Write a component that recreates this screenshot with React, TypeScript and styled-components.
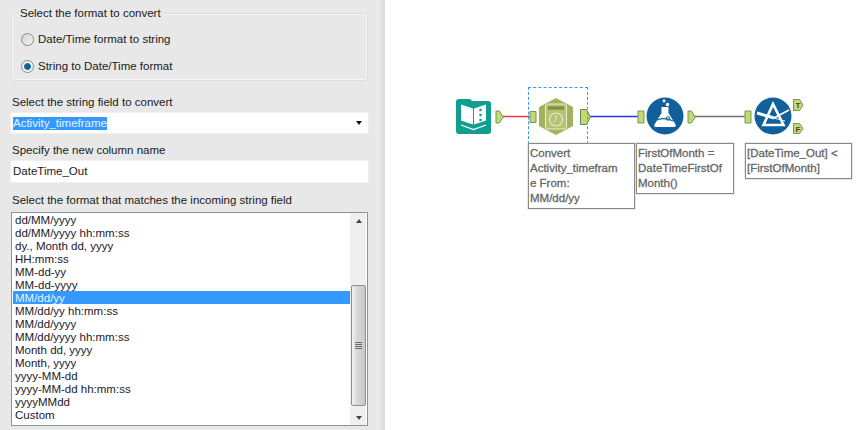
import React from "react";
import styled, { createGlobalStyle } from "styled-components";

const Global = createGlobalStyle`
  html, body { margin: 0; padding: 0; background: #fff; overflow: hidden; }
  #root { width: 857px; height: 430px; }
  * { box-sizing: border-box; }
`;

const Page = styled.div`
  display: flex;
  width: 857px;
  height: 430px;
  font-family: "Liberation Sans", Arial, sans-serif;
  font-size: 11.5px;
  color: #1a1a1a;
  overflow: hidden;
`;

const Panel = styled.div`
  width: 385px;
  height: 430px;
  flex: none;
  background: #e8e8e8;
  border-right: 4px solid #dedede;
  padding: 13px 13px 0 11px;
  display: flex;
  flex-direction: column;
`;

const Group = styled.fieldset`
  margin: 0;
  padding: 0;
  height: 68px;
  border: 1px solid #d3dfe8;
  border-radius: 3px;
  box-shadow: inset 0 0 0 1px #f4f6f8;
  display: flex;
  flex-direction: column;
  position: relative;
`;

const Legend = styled.div`
  position: absolute;
  left: 6px;
  top: -9px;
  padding: 0 2px;
  background: #e8e8e8;
  line-height: 16px;
  white-space: nowrap;
`;

const RadioRow = styled.div<{ $top: number }>`
  display: flex;
  align-items: center;
  gap: 4px;
  height: 16px;
  margin: ${(p) => p.$top}px 0 0 9px;
`;

const RadioDot = styled.span<{ $on?: boolean }>`
  width: 13px;
  height: 13px;
  border-radius: 50%;
  border: 1px solid #8a8a8a;
  flex: none;
  background: ${(p) =>
    p.$on
      ? "radial-gradient(circle, #0f5f93 0 2.6px, #3b87b5 3.2px, #f2f2f2 3.8px)"
      : "linear-gradient(135deg, #d0d0d0, #f6f6f6)"};
`;

const FieldLabel = styled.div<{ $top: number }>`
  margin-top: ${(p) => p.$top}px;
  padding-left: 1px;
  line-height: 16px;
  height: 16px;
  white-space: nowrap;
`;

const SelectBox = styled.div`
  margin-top: 3px;
  height: 20px;
  background: #fff;
  border-radius: 1px;
  box-shadow: 0 0 0 1px #f0f0f0;
  display: flex;
  align-items: center;
  justify-content: space-between;
  padding: 0 5px 0 2px;
`;

const Highlight = styled.span`
  background: #3399ff;
  color: #e8f3ff;
  height: 13px;
  line-height: 13px;
  display: block;
`;

const Caret = styled.span`
  width: 0;
  height: 0;
  border-left: 3.5px solid transparent;
  border-right: 3.5px solid transparent;
  border-top: 4px solid #111;
  margin-right: 1px;
`;

const TextField = styled.div`
  margin-top: 3px;
  height: 21px;
  background: #fff;
  border-radius: 1px;
  box-shadow: 0 0 0 1px #f0f0f0;
  padding-left: 2px;
  line-height: 20px;
`;

const ListBox = styled.div`
  margin-top: 4px;
  height: 214px;
  border: 1px solid #8c939a;
  background: #fff;
  display: flex;
  padding: 0 1px;
`;

const Items = styled.div`
  flex: 1;
`;

const Item = styled.div<{ $sel?: boolean }>`
  height: 13px;
  line-height: 13px;
  padding: 1px 0 0 2px;
  white-space: nowrap;
  background: ${(p) => (p.$sel ? "#3399ff" : "transparent")};
  color: ${(p) => (p.$sel ? "#e8f3ff" : "#1a1a2a")};
`;

const ScrollBar = styled.div`
  width: 16px;
  flex: none;
  background: #efefef;
  display: flex;
  flex-direction: column;
  align-items: center;
  padding-left: 1px;
`;

const ArrowBtn = styled.div`
  height: 15px;
  flex: none;
  display: flex;
  align-items: center;
  justify-content: center;
`;

const Arrow = styled.span<{ $up?: boolean }>`
  width: 0;
  height: 0;
  border-left: 3.5px solid transparent;
  border-right: 3.5px solid transparent;
  ${(p) => (p.$up ? "border-bottom: 4px solid #444;" : "border-top: 4px solid #444;")}
`;

const Track = styled.div`
  flex: 1;
  width: 100%;
  padding-top: 57px;
`;

const Thumb = styled.div`
  width: 15px;
  height: 121px;
  border: 1px solid #8f8f8f;
  border-radius: 2px;
  background: linear-gradient(90deg, #f2f2f2, #d8d8d8 40%, #c8c8c8);
  display: flex;
  flex-direction: column;
  align-items: center;
  justify-content: center;
  gap: 1px;
`;

const Grip = styled.span`
  width: 7px;
  height: 1px;
  background: #6a6a6a;
`;

const Canvas = styled.div`
  flex: 1;
  position: relative;
  background: #fff;
`;

const Wires = styled.svg`
  position: absolute;
  left: 0;
  top: 0;
`;

const Selection = styled.div`
  position: absolute;
  left: 143px;
  top: 87px;
  width: 60px;
  height: 57px;
  border: 1px dashed #3f97e8;
`;

const Note = styled.div<{ $l: number; $w: number; $h: number }>`
  position: absolute;
  left: ${(p) => p.$l}px;
  top: 143px;
  width: ${(p) => p.$w}px;
  height: ${(p) => p.$h}px;
  background: #fff;
  border: 1px solid #8a8a8a;
  box-shadow: 0 0 0 0.5px #cfcfcf;
  padding: 2px 0 0 1px;
  color: #666;
  -webkit-text-stroke: 0.3px #666;
  line-height: 15px;
`;

const NoteLine = styled.div`
  white-space: nowrap;
`;

const formats = [
  "dd/MM/yyyy",
  "dd/MM/yyyy hh:mm:ss",
  "dy., Month dd, yyyy",
  "HH:mm:ss",
  "MM-dd-yy",
  "MM-dd-yyyy",
  "MM/dd/yy",
  "MM/dd/yy hh:mm:ss",
  "MM/dd/yyyy",
  "MM/dd/yyyy hh:mm:ss",
  "Month dd, yyyy",
  "Month, yyyy",
  "yyyy-MM-dd",
  "yyyy-MM-dd hh:mm:ss",
  "yyyyMMdd",
  "Custom",
];

const Anchor = ({ x, y, w = 7, h = 12, pointed = true }: { x: number; y: number; w?: number; h?: number; pointed?: boolean }) => (
  <path
    d={
      pointed
        ? `M${x} ${y}h${w * 0.5}l${w * 0.5} ${h / 2}l${-w * 0.5} ${h / 2}h${-w * 0.5}z`
        : `M${x} ${y}h${w}v${h}h${-w}z`
    }
    fill="#c4d96f"
    stroke="#6f9a5a"
    strokeWidth="1"
  />
);

const Letter = styled.text`
  font-family: "Liberation Sans", sans-serif;
  font-size: 8px;
  font-weight: 700;
  fill: #444;
`;

export default function App() {
  const ox = 385;
  return (
    <Page>
      <Global />
      <Panel>
        <Group>
          <Legend>Select the format to convert</Legend>
          <RadioRow $top={17}>
            <RadioDot />
            <span>Date/Time format to string</span>
          </RadioRow>
          <RadioRow $top={11}>
            <RadioDot $on />
            <span>String to Date/Time format</span>
          </RadioRow>
        </Group>
        <FieldLabel $top={13}>Select the string field to convert</FieldLabel>
        <SelectBox>
          <Highlight>Activity_timeframe</Highlight>
          <Caret />
        </SelectBox>
        <FieldLabel $top={9}>Specify the new column name</FieldLabel>
        <TextField>DateTime_Out</TextField>
        <FieldLabel $top={10}>Select the format that matches the incoming string field</FieldLabel>
        <ListBox>
          <Items>
            {formats.map((f) => (
              <Item key={f} $sel={f === "MM/dd/yy"}>
                {f}
              </Item>
            ))}
          </Items>
          <ScrollBar>
            <ArrowBtn>
              <Arrow $up />
            </ArrowBtn>
            <Track>
              <Thumb>
                <Grip />
                <Grip />
                <Grip />
                <Grip />
              </Thumb>
            </Track>
            <ArrowBtn>
              <Arrow />
            </ArrowBtn>
          </ScrollBar>
        </ListBox>
      </Panel>
      <Canvas>
        <Wires width="472" height="430" viewBox={`${ox} 0 472 430`}>
          <line x1="503" y1="116.5" x2="530" y2="116.5" stroke="#e8383f" strokeWidth="1.5" />
          <line x1="590" y1="116.5" x2="640" y2="116.5" stroke="#2f35e0" strokeWidth="1.5" />
          <line x1="694" y1="116.5" x2="747" y2="116.5" stroke="#707070" strokeWidth="1.5" />

          <path d="M456 102q0-3 3-3h11l2 2h16q3 0 3 3v27q0 3-3 3h-29q-3 0-3-3z" fill="#119e8e" />
          <path d="M461 104.500l12 4v16l-12-4z" fill="#fff" />
          <path d="M486 104.500l-12 4v16l12-4z" fill="#fff" />
          <path d="M461 125l12.500 4.500 12.500-4.500" fill="none" stroke="#fff" strokeWidth="1.300" />
          <circle cx="480.500" cy="110" r="1.300" fill="#119e8e" />
          <circle cx="480.500" cy="115" r="1.300" fill="#119e8e" />
          <circle cx="480.500" cy="120" r="1.300" fill="#119e8e" />
          <Anchor x={496} y={111} />

          <Anchor x={530} y={111.5} w={6} h={11} pointed={false} />
          <path d="M556 98l17 9v19l-17 9-17-9v-19z" fill="#a3b35b" />
          <rect x="545.500" y="104" width="21" height="25" rx="2" fill="#b4c271" stroke="#e8edcf" strokeWidth="1" />
          <rect x="548" y="106.500" width="16" height="3" fill="#7d8c3f" />
          <circle cx="556" cy="119.500" r="6.500" fill="none" stroke="#e8edcf" strokeWidth="1.200" />
          <path d="M556 115v4.500l-2.500 3" fill="none" stroke="#e8edcf" strokeWidth="1" />
          <path d="M580.500 109.500h6l4 7.500-4 7.500h-6z" fill="#c4d96f" stroke="#5f8a5a" strokeWidth="1" />

          <Anchor x={638} y={111} w={6} h={12} pointed={false} />
          <circle cx="665" cy="116" r="18.500" fill="#11609c" />
          <path d="M661.500 107v6l-7 11.500q-1 2.500 1.500 2.500h18q2.500 0 1.500-2.500l-7-11.500v-6z" fill="#fff" />
          <path d="M657 120q8-3 16 1" fill="none" stroke="#11609c" strokeWidth="1.300" />
          <circle cx="668" cy="118.500" r="1.800" fill="none" stroke="#11609c" strokeWidth="1" />
          <circle cx="664" cy="101" r="1.400" fill="#fff" />
          <circle cx="667.500" cy="104.500" r="1.700" fill="#fff" />
          <Anchor x={688} y={111} />

          <Anchor x={745} y={111} w={6} h={12} pointed={false} />
          <circle cx="773" cy="116" r="18.500" fill="#11609c" />
          <path d="M773 104l-9.500 21h20z" fill="none" stroke="#fff" strokeWidth="2.600" />
          <path d="M757 113l17 5" fill="none" stroke="#fff" strokeWidth="3" />
          <path d="M774 118l15-8" fill="none" stroke="#fff" strokeWidth="1.600" />
          <path d="M774 118l11 3" fill="none" stroke="#fff" strokeWidth="1" />
          <path d="M793.500 99.500h6l3.500 5.500-3.500 5.500h-6z" fill="#c4d96f" stroke="#6f9a5a" />
          <Letter x="795.500" y="108">T</Letter>
          <path d="M793.500 123.500h6l3.500 5-3.500 5h-6z" fill="#c4d96f" stroke="#6f9a5a" />
          <Letter x="795.500" y="131.500">F</Letter>
        </Wires>
        <Selection />
        <Note $l={143} $w={107} $h={66}>
          <NoteLine>Convert</NoteLine>
          <NoteLine>Activity_timefram</NoteLine>
          <NoteLine>e From:</NoteLine>
          <NoteLine>MM/dd/yy</NoteLine>
        </Note>
        <Note $l={251} $w={98} $h={51}>
          <NoteLine>FirstOfMonth =</NoteLine>
          <NoteLine>DateTimeFirstOf</NoteLine>
          <NoteLine>Month()</NoteLine>
        </Note>
        <Note $l={360} $w={107} $h={36}>
          <NoteLine>[DateTime_Out] &lt;</NoteLine>
          <NoteLine>[FirstOfMonth]</NoteLine>
        </Note>
      </Canvas>
    </Page>
  );
}
